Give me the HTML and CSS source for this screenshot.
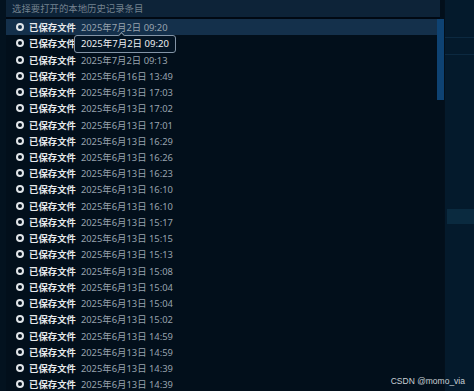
FILE: index.html
```html
<!DOCTYPE html>
<html lang="zh-CN">
<head>
    <meta charset="UTF-8">
    <meta name="viewport" content="width=device-width, initial-scale=1.0">
    <title>本地历史记录</title>
    <link rel="stylesheet" href="styles.css">
</head>
<body>
    <div class="page">
        <div class="gutter"></div>

        <div class="picker">
            <div class="picker-input">选择要打开的本地历史记录条目</div>

            <div class="picker-list">
                <div class="row selected"><span class="ring"></span><span class="title">已保存文件</span><span class="date">2025年7月2日 09:20</span></div>
                <div class="row"><span class="ring"></span><span class="title">已保存文件</span><span class="date">2025年7月2日 09:20</span></div>
                <div class="row"><span class="ring"></span><span class="title">已保存文件</span><span class="date">2025年7月2日 09:13</span></div>
                <div class="row"><span class="ring"></span><span class="title">已保存文件</span><span class="date">2025年6月16日 13:49</span></div>
                <div class="row"><span class="ring"></span><span class="title">已保存文件</span><span class="date">2025年6月13日 17:03</span></div>
                <div class="row"><span class="ring"></span><span class="title">已保存文件</span><span class="date">2025年6月13日 17:02</span></div>
                <div class="row"><span class="ring"></span><span class="title">已保存文件</span><span class="date">2025年6月13日 17:01</span></div>
                <div class="row"><span class="ring"></span><span class="title">已保存文件</span><span class="date">2025年6月13日 16:29</span></div>
                <div class="row"><span class="ring"></span><span class="title">已保存文件</span><span class="date">2025年6月13日 16:26</span></div>
                <div class="row"><span class="ring"></span><span class="title">已保存文件</span><span class="date">2025年6月13日 16:23</span></div>
                <div class="row"><span class="ring"></span><span class="title">已保存文件</span><span class="date">2025年6月13日 16:10</span></div>
                <div class="row"><span class="ring"></span><span class="title">已保存文件</span><span class="date">2025年6月13日 16:10</span></div>
                <div class="row"><span class="ring"></span><span class="title">已保存文件</span><span class="date">2025年6月13日 15:17</span></div>
                <div class="row"><span class="ring"></span><span class="title">已保存文件</span><span class="date">2025年6月13日 15:15</span></div>
                <div class="row"><span class="ring"></span><span class="title">已保存文件</span><span class="date">2025年6月13日 15:13</span></div>
                <div class="row"><span class="ring"></span><span class="title">已保存文件</span><span class="date">2025年6月13日 15:08</span></div>
                <div class="row"><span class="ring"></span><span class="title">已保存文件</span><span class="date">2025年6月13日 15:04</span></div>
                <div class="row"><span class="ring"></span><span class="title">已保存文件</span><span class="date">2025年6月13日 15:04</span></div>
                <div class="row"><span class="ring"></span><span class="title">已保存文件</span><span class="date">2025年6月13日 15:02</span></div>
                <div class="row"><span class="ring"></span><span class="title">已保存文件</span><span class="date">2025年6月13日 14:59</span></div>
                <div class="row"><span class="ring"></span><span class="title">已保存文件</span><span class="date">2025年6月13日 14:59</span></div>
                <div class="row"><span class="ring"></span><span class="title">已保存文件</span><span class="date">2025年6月13日 14:39</span></div>
                <div class="row"><span class="ring"></span><span class="title">已保存文件</span><span class="date">2025年6月13日 14:39</span></div>

                <div class="scrollbar"></div>

                <div class="tooltip">2025年7月2日 09:20</div>
            </div>
        </div>

        <div class="side">
            <div class="side-line first"></div>
            <div class="side-line"></div>
            <div class="side-block"></div>
        </div>
    </div>

    <div class="watermark">CSDN @momo_via</div>
</body>
</html>
```

FILE: styles.css
```css
* {
    margin: 0;
    padding: 0;
    box-sizing: border-box;
}

body {
    width: 474px;
    height: 391px;
    overflow: hidden;
    background-color: #020f1b;
    font-family: "Noto Sans", "Noto Sans CJK SC", sans-serif;
    position: relative;
}

.page {
    display: flex;
    height: 391px;
}

.gutter {
    width: 6px;
    background-color: #03121f;
}

.picker {
    width: 438px;
    display: flex;
    flex-direction: column;
    background-color: #020f1b;
}

.picker-input {
    height: 19px;
    margin-right: 4px;
    padding-left: 6px;
    background-color: #0d2338;
    color: #74828f;
    font-family: "Noto Sans CJK SC", sans-serif;
    font-size: 9.4px;
    line-height: 16px;
    border-bottom: 2px solid #010913;
}

.picker-list {
    position: relative;
    flex: 1;
    overflow: hidden;
}

.row {
    height: 16.24px;
    display: flex;
    align-items: center;
    padding-left: 10px;
    white-space: nowrap;
}

.row.selected {
    background-color: #14304b;
    margin-right: 7px;
}

.ring {
    width: 8px;
    height: 8px;
    border: 2px solid #e2e6ea;
    border-radius: 50%;
    margin-right: 5px;
}

.title {
    font-family: "Noto Sans CJK SC", sans-serif;
    font-size: 9.4px;
    font-weight: 700;
    color: #e6e9ec;
    margin-right: 5px;
}

.date {
    font-size: 9.4px;
    color: #98a3ae;
}

.scrollbar {
    position: absolute;
    top: 0;
    right: 0;
    width: 7px;
    height: 81px;
    background-color: #0e4272;
}

.tooltip {
    position: absolute;
    left: 68px;
    top: 16px;
    height: 18px;
    padding: 0 6px;
    border: 1px solid #8394a6;
    border-radius: 3px;
    background-color: #041423;
    color: #eef1f4;
    font-size: 9.5px;
    line-height: 16px;
    white-space: nowrap;
}

.tooltip::before {
    content: "";
    position: absolute;
    left: 44px;
    top: -3px;
    width: 4px;
    height: 4px;
    background-color: #041423;
    border-left: 1px solid #8394a6;
    border-top: 1px solid #8394a6;
    transform: rotate(45deg);
}

.side {
    flex: 1;
    background-color: #041a2c;
    border-left: 1px solid #03101c;
}

.side-line {
    height: 17px;
    border-bottom: 1px solid #0c2940;
}

.side-line.first {
    height: 38px;
}

.side-block {
    height: 15px;
    margin-top: 154px;
    margin-left: 2px;
    background-color: #0a2a3f;
}

.watermark {
    position: absolute;
    right: 9px;
    bottom: 5px;
    font-family: "Liberation Sans", sans-serif;
    font-size: 8.5px;
    color: #c9d0d6;
}
```
